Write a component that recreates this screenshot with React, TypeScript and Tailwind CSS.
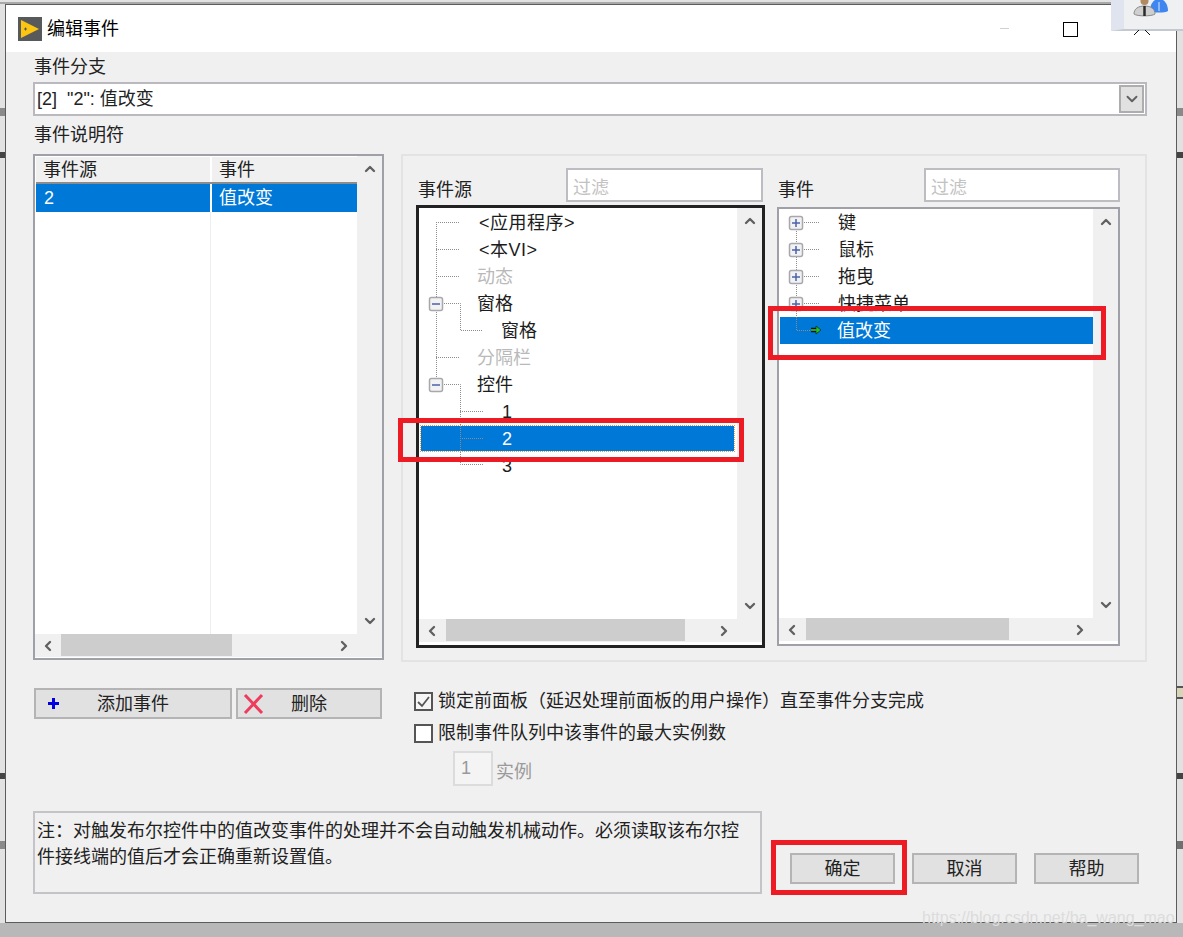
import React from "react";
import { ChevronDown, ChevronLeft, ChevronRight, ChevronUp } from "lucide-react";

const grayText = "text-[#b9b9b9]";

const VScroll = () => (
  <div className="w-[25px] shrink-0 bg-[#f0f0f0] flex flex-col items-center justify-between pt-[5px] pb-[5px] text-[#606060]">
    <ChevronUp size={16} strokeWidth={3.5} />
    <ChevronDown size={16} strokeWidth={3.5} />
  </div>
);

const HScroll = ({ thumbLeft, thumbWidth }: { thumbLeft: number; thumbWidth: number }) => (
  <div className="h-[23px] shrink-0 bg-[#f0f0f0] flex items-center justify-between pl-[5px] pr-[30px] relative text-[#606060]">
    <ChevronLeft size={16} strokeWidth={3.5} />
    <div
      className="absolute top-0 h-[22px] bg-[#cdcdcd]"
      style={{ left: thumbLeft, width: thumbWidth }}
    />
    <ChevronRight size={16} strokeWidth={3.5} />
  </div>
);

const Btn = ({ children, className }: { children: React.ReactNode; className: string }) => (
  <div
    className={`h-[31px] bg-[#e1e1e1] border-2 border-[#b4b4b4] flex items-center justify-center relative text-[18px] leading-none text-[#222] ${className}`}
  >
    {children}
  </div>
);

const FilterInput = ({ className }: { className: string }) => (
  <div
    className={`h-[34px] bg-white border-2 border-[#bcbcc2] pl-[5px] pt-[5px] flex items-center text-[18px] leading-none text-[#c2c2c2] ${className}`}
  >
    过滤
  </div>
);

const Row = ({
  text,
  indent,
  gray,
  selected,
  wide,
}: {
  text: string;
  indent: number;
  gray?: boolean;
  selected?: boolean;
  wide?: boolean;
}) => (
  <div
    className={`h-[27px] flex items-center text-[18px] leading-none whitespace-nowrap ${
      selected ? "bg-[#0078d7] text-white" : gray ? grayText : "text-[#1c1c1c]"
    } ${wide ? "tracking-[0.5px]" : ""}`}
    style={{ paddingLeft: indent }}
  >
    {text}
  </div>
);

const Expander = ({ x, y, plus }: { x: number; y: number; plus?: boolean }) => (
  <g>
    <rect x={x + 0.5} y={y + 0.5} width={13} height={13} rx={2} fill="#f2f2f4" stroke="#a8a8ac" strokeWidth={1.5} />
    <path d={`M${x + 3} ${y + 7}h8`} stroke="#4a62a8" strokeWidth={1.5} />
    {plus && <path d={`M${x + 7} ${y + 3}v8`} stroke="#4a62a8" strokeWidth={1.5} />}
  </g>
);

const Dots = ({ d }: { d: string }) => (
  <path d={d} fill="none" stroke="#8c8c8c" strokeWidth={1} strokeDasharray="1 1" />
);

// page coordinates minus the inner origin of each tree box
const SourceLines = () => (
  <svg className="absolute left-0 top-0 pointer-events-none" width={340} height={300}>
    <Dots d="M17.5 14V175" />
    <Dots d="M17 14.500H40M17 41.500H40M17 68.500H40M17 95.500H41.500V122.500H64M17 149.500H40M17 176.500H41.500V256.500H64M41 203.500H64M41 230.500H64" />
    <Expander x={10} y={89} />
    <Expander x={10} y={170} />
  </svg>
);

const EventLines = () => (
  <svg className="absolute left-0 top-0 pointer-events-none" width={300} height={140}>
    <Dots d="M17.500 14V121.500H32" />
    <Dots d="M17 13.500H40M17 40.500H40M17 67.500H40M17 94.500H40" />
    <Expander x={10} y={7} plus />
    <Expander x={10} y={34} plus />
    <Expander x={10} y={61} plus />
    <Expander x={10} y={88} plus />
    <path d="M32 119.500h7M32 122.500h7" stroke="#101010" strokeWidth={1.5} />
    <path d="M37 117l5 4-5 4z" fill="#22c022" stroke="#101010" strokeWidth={0.6} />
    <path d="M32 121h7" stroke="#22c022" strokeWidth={1.5} />
  </svg>
);

const People = () => (
  <svg width={40} height={18} viewBox="0 0 40 18">
    <path d="M17 11c0-6 3-12 9-12s9 6 9 12c-3 2-15 2-18 0z" fill="#3f86f0" />
    <path d="M26 2v9" stroke="#a9c8f7" strokeWidth={1.5} />
    <path d="M1 14c0-5 4-8 10.500-8S22 9 22 14c-3 2.500-18 2.500-21 0z" fill="#cfcfcf" stroke="#8a8a8a" />
    <path d="M11.500 6v10" stroke="#2a2a2a" strokeWidth={2.5} />
    <circle cx="11.500" cy="1" r="4" fill="#b08a60" />
  </svg>
);

export default function App() {
  return (
    <div className="w-[1183px] h-[937px] bg-[#e2e2e2] pt-[4px] pl-[5px] relative overflow-hidden font-['Liberation_Sans','Noto_Sans_CJK_SC',sans-serif]">
      {/* desktop behind the dialog */}
      <div className="absolute left-0 top-[923px] w-full h-[14px] bg-[#b8b8b8]" />
      <div className="absolute left-0 top-[2px] w-full h-[2px] bg-[#a8a8a8]" />

      {/* dialog window */}
      <div className="w-[1172px] h-[919px] bg-[#f0f0f0] border border-[#5c5c5c] flex flex-col relative">
        {/* title bar */}
        <div className="h-[47px] shrink-0 bg-white flex items-center pl-[12px] relative">
          <svg width={24} height={24} viewBox="0 0 24 24">
            <rect width="24" height="24" fill="#58595b" />
            <path d="M3 3 L21 12 L3 21z" fill="#fcc512" />
            <path d="M6 12h3M7.500 10.500v3" stroke="#58595b" strokeWidth={1} />
          </svg>
          <span className="ml-[5px] text-[18px] leading-none text-black">编辑事件</span>
          <div className="ml-auto mr-[98px] w-[15px] h-[15px] border border-black mt-[1px]" />
        </div>

        {/* body */}
        <div className="pl-[27px] flex-1 flex flex-col text-[#222]">
          <div className="h-[30px] flex items-center text-[18px] leading-none pl-[1px]">事件分支</div>
          <div className="w-[1114px] h-[34px] bg-white border-2 border-[#b9b9bf] flex items-center justify-between pl-[2px] pr-[1px] text-[18px]">
            <span className="leading-none whitespace-pre">{'[2]  "2": 值改变'}</span>
            <div className="w-[25px] h-[28px] bg-[#e1e1e1] border-2 border-[#adadad] flex items-center justify-center text-[#606060]">
              <ChevronDown size={18} strokeWidth={2.5} />
            </div>
          </div>
          <div className="h-[38px] flex items-center text-[18px] leading-none pl-[1px]">事件说明符</div>

          <div className="flex h-[508px] gap-[17px]">
            {/* descriptor list */}
            <div className="w-[351px] h-[506px] bg-white border-2 border-[#a0a0a8] flex flex-col">
              <div className="flex-1 flex min-h-0">
                <div className="flex-1 flex flex-col pl-[1px] pt-[1px]">
                  <div className="h-[25px] flex bg-[#f0f0f0] border-b-2 border-b-[#8c8c8c] text-[18px] leading-none box-content">
                    <div className="w-[174px] pl-[7px] flex items-center">事件源</div>
                    <div className="w-[2px] bg-white" />
                    <div className="flex-1 pl-[7px] flex items-center">事件</div>
                  </div>
                  <div className="h-[28px] flex bg-[#0078d7] text-white text-[18px] leading-none">
                    <div className="w-[174px] pl-[8px] flex items-center">2</div>
                    <div className="w-[2px] bg-white" />
                    <div className="flex-1 pl-[7px] flex items-center">值改变</div>
                  </div>
                  <div className="flex-1 flex">
                    <div className="w-[175px] border-r border-[#eeeeee]" />
                  </div>
                </div>
                <VScroll />
              </div>
              <HScroll thumbLeft={26} thumbWidth={171} />
              <div className="h-[1px] shrink-0" />
            </div>

            {/* event picker panel */}
            <div className="w-[746px] h-[508px] border-2 border-[#e3e3e3] flex pl-[13px] pt-[12px] gap-[12px]">
              <div className="w-[349px] flex flex-col">
                <div className="h-[37px] flex justify-between items-start pr-[2px] pl-[2px]">
                  <span className="text-[18px] leading-none mt-[13px]">事件源</span>
                  <FilterInput className="w-[197px]" />
                </div>
                <div className="w-[349px] h-[443px] bg-white border-[3px] border-[#222] flex flex-col">
                  <div className="flex-1 flex min-h-0">
                    <div className="flex-1 relative pt-[1px] pl-[1px]">
                      <Row text="<应用程序>" indent={59} wide />
                      <Row text="<本VI>" indent={59} wide />
                      <Row text="动态" indent={57} gray />
                      <Row text="窗格" indent={57} />
                      <Row text="窗格" indent={81} />
                      <Row text="分隔栏" indent={57} gray />
                      <Row text="控件" indent={57} />
                      <Row text="1" indent={82} />
                      <div className="border border-dotted border-[#e0a050] w-[315px]">
                        <div className="h-[25px] flex items-center bg-[#0078d7] text-white text-[18px] leading-none pl-[81px]">2</div>
                      </div>
                      <Row text="3" indent={82} />
                      <SourceLines />
                    </div>
                    <VScroll />
                  </div>
                  <HScroll thumbLeft={27} thumbWidth={239} />
                  <div className="h-[3px] shrink-0" />
                </div>
              </div>

              <div className="w-[343px] flex flex-col">
                <div className="h-[39px] flex justify-between items-start">
                  <span className="text-[18px] leading-none mt-[13px] ml-[1px]">事件</span>
                  <FilterInput className="w-[196px]" />
                </div>
                <div className="w-[343px] h-[439px] bg-white border-2 border-[#a0a0a8] flex flex-col">
                  <div className="flex-1 flex min-h-0">
                    <div className="flex-1 relative pl-[1px]">
                      <Row text="键" indent={58} />
                      <Row text="鼠标" indent={58} />
                      <Row text="拖曳" indent={58} />
                      <Row text="快捷菜单" indent={58} />
                      <Row text="值改变" indent={57} selected />
                      <EventLines />
                    </div>
                    <VScroll />
                  </div>
                  <HScroll thumbLeft={27} thumbWidth={203} />
                  <div className="h-[3px] shrink-0" />
                </div>
              </div>
            </div>
          </div>

          {/* buttons and options */}
          <div className="h-[149px] flex pt-[26px]">
            <div className="w-[381px] flex gap-[4px] pl-[1px]">
              <Btn className="w-[198px]">
                <svg className="absolute left-[11px] top-[7px]" width={13} height={13} viewBox="0 0 13 13">
                  <path d="M6.500 1v11M1 6.500h11" stroke="#0000e0" strokeWidth={3} />
                </svg>
                添加事件
              </Btn>
              <Btn className="w-[146px]">
                <svg className="absolute left-[5px] top-[3px]" width={21} height={22} viewBox="0 0 21 22">
                  <path d="M2 2l17 18M19 2L2 20" stroke="#ee3b5e" strokeWidth={3} />
                </svg>
                删除
              </Btn>
            </div>
            <div className="flex flex-col text-[18px] leading-none">
              <div className="flex items-center h-[26px] gap-[5px]">
                <div className="w-[19px] h-[19px] border-2 border-[#555] bg-[#f6f6f6] flex items-center justify-center">
                  <svg width={15} height={15} viewBox="0 0 15 15">
                    <path d="M2 8l4 4 7-9" fill="none" stroke="#555" strokeWidth={1.8} />
                  </svg>
                </div>
                <span className="whitespace-nowrap">锁定前面板（延迟处理前面板的用户操作）直至事件分支完成</span>
              </div>
              <div className="flex items-center h-[26px] gap-[5px] mt-[6px]">
                <div className="w-[19px] h-[19px] border-2 border-[#555] bg-white" />
                <span className="whitespace-nowrap">限制事件队列中该事件的最大实例数</span>
              </div>
              <div className="flex items-end mt-[5px] ml-[39px] gap-[3px]">
                <div className="w-[40px] h-[35px] bg-[#f4f4f4] border-2 border-[#dcdcdc] pl-[6px] pt-[6px] text-[#9a9a9a]">1</div>
                <span className="text-[#9a9a9a] mb-[5px]">实例</span>
              </div>
            </div>
          </div>

          {/* note and dialog buttons */}
          <div className="flex items-start">
            <div className="w-[729px] h-[83px] border-2 border-[#c4c4c8] pl-[2px] pt-[5px] text-[18px] leading-[26px] whitespace-nowrap">
              <div>注：对触发布尔控件中的值改变事件的处理并不会自动触发机械动作。必须读取该布尔控</div>
              <div>件接线端的值后才会正确重新设置值。</div>
            </div>
            <div className="flex mt-[42px] ml-[28px] gap-[17px]">
              <Btn className="w-[105px]">确定</Btn>
              <Btn className="w-[105px]">取消</Btn>
              <Btn className="w-[105px]">帮助</Btn>
            </div>
          </div>
        </div>
      </div>

      {/* annotations drawn on top of the screenshot */}
      <div className="absolute left-[398px] top-[418px] w-[346px] h-[44px] border-[5px] border-[#ed1c24]" />
      <div className="absolute left-[768px] top-[306px] w-[338px] h-[54px] border-[5px] border-[#ed1c24]" />
      <div className="absolute left-[771px] top-[840px] w-[136px] h-[55px] border-[5px] border-[#ed1c24]" />
      <div className="absolute left-[922px] top-[908px] text-[16px] leading-[20px] text-[#dcdcdc] whitespace-nowrap">
        https://blog.csdn.net/ba_wang_mao
      </div>

      {/* desktop icon overlapping the corner */}
      <div className="absolute left-[1111px] top-0 w-[72px] h-[31px] bg-[#eef0f2] border-l-[13px] border-l-[#e0e4ee] border-b-2 border-b-[#c4c8d0] overflow-hidden pl-[9px]">
        <People />
      </div>
      <svg className="absolute left-[1130px] top-[28px]" width={24} height={8}>
        <path d="M4 7l5-5M15 2l5 5" stroke="#111" strokeWidth={1} />
      </svg>
      <div className="absolute left-[1000px] top-[28px] w-[9px] h-px bg-[#d0d0d0]" />

      {/* bits of the diagram behind the dialog */}
      <div className="absolute left-0 top-[108px] w-[5px] h-[8px] bg-[#8a8a8a]" />
      <div className="absolute left-0 top-[152px] w-[5px] h-[6px] bg-[#444]" />
      <div className="absolute left-0 top-[773px] w-[5px] h-[6px] bg-[#444]" />
      <div className="absolute left-0 top-[841px] w-[5px] h-[8px] bg-[#8a8a8a]" />
      <div className="absolute left-[1177px] top-[108px] w-[6px] h-[8px] bg-[#8a8a8a]" />
      <div className="absolute left-[1177px] top-[152px] w-[6px] h-[6px] bg-[#444]" />
      <div className="absolute left-[1177px] top-[686px] w-[6px] h-[13px] bg-[#d8d4b8] border-y-2 border-y-[#555]" />
      <div className="absolute left-[1177px] top-[773px] w-[6px] h-[6px] bg-[#444]" />
      <div className="absolute left-[1177px] top-[841px] w-[6px] h-[8px] bg-[#707070]" />
    </div>
  );
}
